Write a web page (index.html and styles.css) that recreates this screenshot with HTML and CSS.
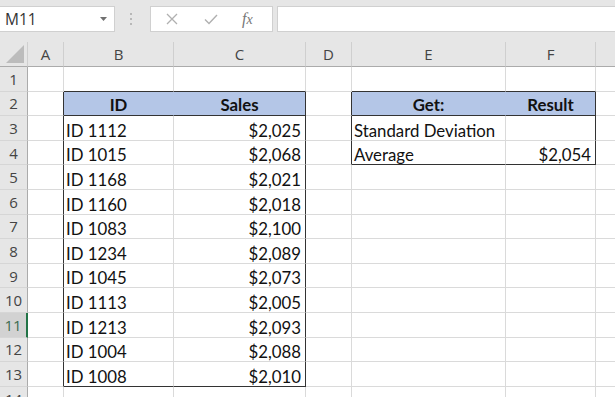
FILE: index.html
```html
<!DOCTYPE html>
<html lang="en">
<head>
  <meta charset="UTF-8">
  <title>Sales - Excel</title>
  <link rel="stylesheet" href="styles.css">
</head>
<body>

  <div class="toolbar">
    <div class="namebox">
      <span>M11</span>
      <svg class="drop" width="7" height="4" viewBox="0 0 7 4"><path d="M0 0h7L3.5 4z" fill="#707070"/></svg>
    </div>
    <svg class="grip" width="3" height="13" viewBox="0 0 3 13">
      <rect x="0" y="0" width="2" height="2" fill="#b8b8b8"/>
      <rect x="0" y="5" width="2" height="2" fill="#b8b8b8"/>
      <rect x="0" y="10" width="2" height="2" fill="#b8b8b8"/>
    </svg>
    <div class="fx-buttons">
      <svg width="12" height="12" viewBox="0 0 12 12"><path d="M1 1l10 10M11 1L1 11" stroke="#b0b0b0" stroke-width="1.3" fill="none"/></svg>
      <svg width="14" height="11" viewBox="0 0 14 11"><path d="M1 5.5l4 4L13 1" stroke="#b0b0b0" stroke-width="1.4" fill="none"/></svg>
      <span class="fx">f<i>x</i></span>
    </div>
    <div class="formula"></div>
  </div>

  <table class="sheet">
    <colgroup>
      <col class="w-rh"><col class="w-a"><col class="w-b"><col class="w-c"><col class="w-d"><col class="w-e"><col class="w-f"><col class="w-g">
    </colgroup>
    <thead>
      <tr>
        <th class="corner"><svg width="18" height="18" viewBox="0 0 18 18"><path d="M18 0V18H0z" fill="#bcbcbc"/></svg></th>
        <th>A</th><th>B</th><th>C</th><th>D</th><th>E</th><th>F</th><th></th>
      </tr>
    </thead>
    <tbody>
      <tr><th>1</th><td></td><td class="edge-b"></td><td class="edge-b"></td><td></td><td class="edge-b"></td><td class="edge-b"></td><td></td></tr>
      <tr><th>2</th><td class="edge-r"></td><td class="head">ID</td><td class="head edge-r">Sales</td><td class="edge-r"></td><td class="head">Get:</td><td class="head edge-r">Result</td><td></td></tr>
      <tr><th>3</th><td class="edge-r"></td><td>ID 1112</td><td class="num edge-r">$2,025</td><td class="edge-r"></td><td class="text">Standard Deviation</td><td class="num edge-r"></td><td></td></tr>
      <tr><th>4</th><td class="edge-r"></td><td>ID 1015</td><td class="num edge-r">$2,068</td><td class="edge-r"></td><td class="edge-b">Average</td><td class="num edge-r edge-b">$2,054</td><td></td></tr>
      <tr><th>5</th><td class="edge-r"></td><td>ID 1168</td><td class="num edge-r">$2,021</td><td></td><td></td><td></td><td></td></tr>
      <tr><th>6</th><td class="edge-r"></td><td>ID 1160</td><td class="num edge-r">$2,018</td><td></td><td></td><td></td><td></td></tr>
      <tr><th>7</th><td class="edge-r"></td><td>ID 1083</td><td class="num edge-r">$2,100</td><td></td><td></td><td></td><td></td></tr>
      <tr><th>8</th><td class="edge-r"></td><td>ID 1234</td><td class="num edge-r">$2,089</td><td></td><td></td><td></td><td></td></tr>
      <tr><th>9</th><td class="edge-r"></td><td>ID 1045</td><td class="num edge-r">$2,073</td><td></td><td></td><td></td><td></td></tr>
      <tr><th>10</th><td class="edge-r"></td><td>ID 1113</td><td class="num edge-r">$2,005</td><td></td><td></td><td></td><td></td></tr>
      <tr><th class="active">11</th><td class="edge-r"></td><td>ID 1213</td><td class="num edge-r">$2,093</td><td></td><td></td><td></td><td></td></tr>
      <tr><th>12</th><td class="edge-r"></td><td>ID 1004</td><td class="num edge-r">$2,088</td><td></td><td></td><td></td><td></td></tr>
      <tr><th>13</th><td class="edge-r"></td><td class="edge-b">ID 1008</td><td class="num edge-r edge-b">$2,010</td><td></td><td></td><td></td><td></td></tr>
      <tr><th>14</th><td></td><td></td><td></td><td></td><td></td><td></td><td></td></tr>
    </tbody>
  </table>

</body>
</html>
```

FILE: styles.css
```css
* {
  box-sizing: border-box;
  margin: 0;
  padding: 0;
}
html, body {
  height: 100%;
  overflow: hidden;
  background: #fff;
  font-family: Lato, 'Liberation Sans', sans-serif;
}

/* formula bar */
.toolbar {
  height: 42px;
  background: #e6e6e6;
  display: flex;
  align-items: center;
  padding-bottom: 4px;
}
.namebox {
  width: 115px;
  height: 26px;
  background: #fff;
  border: 1px solid #d0d0d0;
  border-left: none;
  display: flex;
  align-items: center;
  justify-content: space-between;
  padding: 0 7px 0 5px;
  font-family: 'Open Sans', sans-serif;
  font-size: 15.5px;
  color: #333;
}
.grip {
  margin: 0 17px 0 15px;
}
.fx-buttons {
  width: 123px;
  height: 26px;
  background: #fff;
  border: 1px solid #d0d0d0;
  display: flex;
  align-items: center;
  gap: 26px;
  padding-left: 15px;
}
.fx {
  font-family: 'Liberation Serif', serif;
  font-style: italic;
  font-size: 16px;
  color: #777;
  margin-left: -2px;
}
.fx i {
  font-size: 14px;
}
.formula {
  flex: 1;
  height: 26px;
  margin-left: 4px;
  background: #fff;
  border: 1px solid #d0d0d0;
  border-right: none;
}

/* grid */
.sheet {
  table-layout: fixed;
  border-collapse: separate;
  border-spacing: 0;
  width: 666px;
  font-size: 16.8px;
  color: #111;
}
.w-rh { width: 28px; }
.w-a { width: 36px; }
.w-b { width: 110px; }
.w-c { width: 132px; }
.w-d { width: 46px; }
.w-e { width: 154px; }
.w-f { width: 90px; }
.w-g { width: 70px; }

.sheet tr {
  height: 24.6px;
}
.sheet thead tr {
  height: 25px;
}
th {
  background: #e6e6e6;
  font-family: 'Open Sans', sans-serif;
  font-weight: normal;
  font-size: 15px;
  color: #444;
  border-right: 1px solid #cfcfcf;
  border-bottom: 1px solid #d6d6d6;
  text-align: center;
  padding: 0;
}
thead th {
  border-bottom-color: #ababab;
  line-height: 18px;
}
thead th.corner {
  text-align: right;
  vertical-align: bottom;
  padding: 0 3px 3px 0;
  line-height: 0;
}
tbody th {
  border-right-color: #ababab;
  line-height: 18px;
}
tbody th.active {
  background: #d2d2d2;
  color: #3d6b4f;
  border-right: 2px solid #217346;
}
td {
  border-right: 1px solid #dadada;
  border-bottom: 1px solid #dadada;
  padding: 0 4px 0 2px;
  line-height: 19px;
  vertical-align: bottom;
  white-space: nowrap;
  overflow: visible;
}
td.num {
  text-align: right;
}
td.head {
  background: #b4c6e7;
  font-weight: bold;
  text-align: center;
  border-right-color: #b4c6e7;
  border-bottom-color: #333;
  padding: 0 0 1px 0;
}
td.edge-r {
  border-right-color: #333;
}
td.edge-b {
  border-bottom-color: #333;
}
```
